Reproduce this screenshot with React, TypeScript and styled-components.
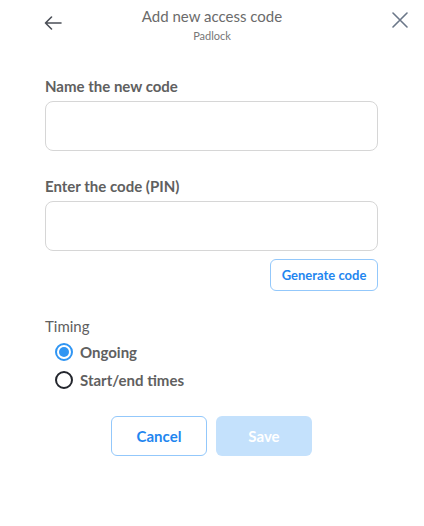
import React, { useState } from "react";
import styled, { createGlobalStyle } from "styled-components";

const Global = createGlobalStyle`
  html, body { margin: 0; padding: 0; background: #ffffff; }
  body { font-family: Lato, "Open Sans", "Liberation Sans", sans-serif; -webkit-font-smoothing: antialiased; }
  * { box-sizing: border-box; }
`;

const Page = styled.div`
  width: 424px;
  min-height: 526px;
  background: #fff;
`;

const Header = styled.header`
  display: grid;
  grid-template-columns: 1fr auto 1fr;
  align-items: start;
  padding: 7px 16px 0 16px;
  height: 60px;
`;

const IconButton = styled.button<{ $align: "start" | "end" }>`
  justify-self: ${(p) => p.$align};
  background: none;
  border: none;
  padding: 0;
  margin-top: ${(p) => (p.$align === "start" ? "9px" : "5px")};
  margin-left: ${(p) => (p.$align === "start" ? "28px" : "0")};
  display: flex;
  cursor: pointer;
  color: ${(p) => (p.$align === "start" ? "#4b4f57" : "#6b7789")};
`;

const TitleBlock = styled.div`
  display: flex;
  flex-direction: column;
  align-items: center;
`;

const Title = styled.div`
  font-size: 15px;
  line-height: 18px;
  color: #6b6b6b;
`;

const Subtitle = styled.div`
  font-size: 11px;
  line-height: 14px;
  margin-top: 4px;
  color: #777;
`;

const Form = styled.div`
  padding: 17px 46px 0 45px;
  display: flex;
  flex-direction: column;
`;

const Field = styled.div`
  display: flex;
  flex-direction: column;
  gap: 6px;
  margin-bottom: 26px;
`;

const Label = styled.label<{ $bold?: boolean }>`
  font-size: 15px;
  line-height: 18px;
  font-weight: ${(p) => (p.$bold ? 700 : 400)};
  color: #606060;
`;

const Input = styled.input`
  height: 50px;
  width: 100%;
  border: 1px solid #d6d6d6;
  border-radius: 8px;
  padding: 0 14px;
  font-size: 15px;
  font-family: inherit;
  outline: none;
`;

const Right = styled.div`
  display: flex;
  justify-content: flex-end;
  margin-top: -18px;
`;

const OutlineButton = styled.button<{ $w: number; $h: number }>`
  width: ${(p) => p.$w}px;
  height: ${(p) => p.$h}px;
  background: #fff;
  border: 1px solid #93c8fb;
  border-radius: 6px;
  color: #1f86ef;
  font-family: inherit;
  font-weight: 700;
  font-size: ${(p) => (p.$h > 35 ? 15 : 13)}px;
  cursor: pointer;
`;

const FilledButton = styled.button<{ $w: number; $h: number }>`
  width: ${(p) => p.$w}px;
  height: ${(p) => p.$h}px;
  background: #c4e1fc;
  border: none;
  border-radius: 6px;
  color: #fff;
  font-family: inherit;
  font-weight: 700;
  font-size: 15px;
`;

const Timing = styled.div`
  margin-top: 26px;
  display: flex;
  flex-direction: column;
`;

const Options = styled.div`
  display: flex;
  flex-direction: column;
  gap: 10px;
  margin-top: 8px;
  padding-left: 10px;
`;

const Option = styled.label`
  display: flex;
  align-items: center;
  gap: 7px;
  font-size: 15px;
  line-height: 18px;
  font-weight: 700;
  color: #606060;
  cursor: pointer;
`;

const Radio = styled.span<{ $on: boolean }>`
  width: 18px;
  height: 18px;
  border-radius: 50%;
  border: 2px solid ${(p) => (p.$on ? "#2f95f3" : "#23262d")};
  display: flex;
  align-items: center;
  justify-content: center;
  &::after {
    content: "";
    width: 10px;
    height: 10px;
    border-radius: 50%;
    background: ${(p) => (p.$on ? "#2f95f3" : "transparent")};
  }
`;

const Actions = styled.div`
  display: flex;
  justify-content: center;
  gap: 9px;
  margin-top: 27px;
`;

export default function App() {
  const [timing, setTiming] = useState("ongoing");
  return (
    <Page>
      <Global />
      <Header>
        <IconButton $align="start" aria-label="Back">
          <svg width="18" height="14" viewBox="0 0 18 14" fill="none" stroke="currentColor" strokeWidth="1.6" strokeLinecap="round" strokeLinejoin="round">
            <path d="M17 7H1.5M7.5 1L1.5 7l6 6" />
          </svg>
        </IconButton>
        <TitleBlock>
          <Title>Add new access code</Title>
          <Subtitle>Padlock</Subtitle>
        </TitleBlock>
        <IconButton $align="end" aria-label="Close">
          <svg width="16" height="16" viewBox="0 0 16 16" fill="none" stroke="currentColor" strokeWidth="1.6" strokeLinecap="round">
            <path d="M1 1l14 14M15 1L1 15" />
          </svg>
        </IconButton>
      </Header>
      <Form>
        <Field>
          <Label $bold>Name the new code</Label>
          <Input />
        </Field>
        <Field>
          <Label $bold>Enter the code (PIN)</Label>
          <Input />
        </Field>
        <Right>
          <OutlineButton $w={108} $h={32}>Generate code</OutlineButton>
        </Right>
        <Timing>
          <Label>Timing</Label>
          <Options>
            <Option onClick={() => setTiming("ongoing")}>
              <Radio $on={timing === "ongoing"} />
              Ongoing
            </Option>
            <Option onClick={() => setTiming("times")}>
              <Radio $on={timing === "times"} />
              Start/end times
            </Option>
          </Options>
        </Timing>
        <Actions>
          <OutlineButton $w={96} $h={40}>Cancel</OutlineButton>
          <FilledButton $w={96} $h={40}>Save</FilledButton>
        </Actions>
      </Form>
    </Page>
  );
}
